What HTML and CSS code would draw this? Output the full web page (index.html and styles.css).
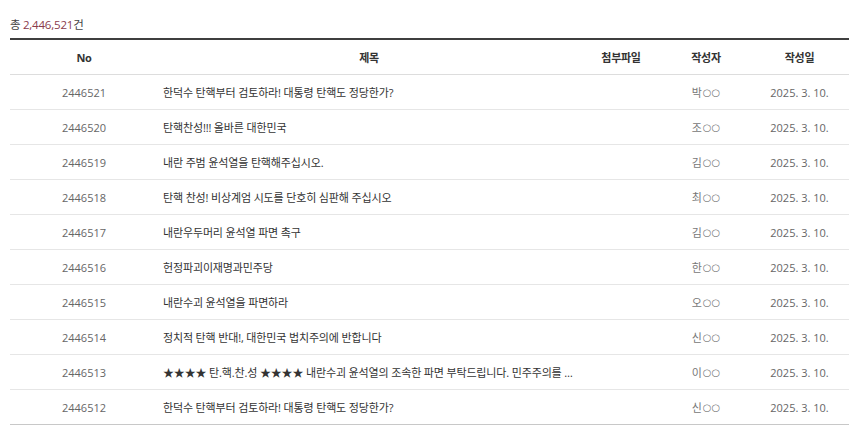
FILE: index.html
```html
<!DOCTYPE html>
<html lang="ko">
<head>
<meta charset="utf-8">
<link rel="stylesheet" href="styles.css">
</head>
<body>
<div class="board">
  <p class="total">총 <span class="count">2,446,521</span>건</p>
  <table class="list">
    <colgroup>
      <col class="c-no"><col class="c-title"><col class="c-file"><col class="c-writer"><col class="c-date">
    </colgroup>
    <thead>
      <tr><th>No</th><th>제목</th><th>첨부파일</th><th>작성자</th><th>작성일</th></tr>
    </thead>
    <tbody>
      <tr><td class="no">2446521</td><td class="title">한덕수 탄핵부터 검토하라! 대통령 탄핵도 정당한가?</td><td></td><td class="writer">박<span class="mask">○○</span></td><td class="date">2025. 3. 10.</td></tr>
      <tr><td class="no">2446520</td><td class="title">탄핵찬성!!! 올바른 대한민국</td><td></td><td class="writer">조<span class="mask">○○</span></td><td class="date">2025. 3. 10.</td></tr>
      <tr><td class="no">2446519</td><td class="title">내란 주범 윤석열을 탄핵해주십시오.</td><td></td><td class="writer">김<span class="mask">○○</span></td><td class="date">2025. 3. 10.</td></tr>
      <tr><td class="no">2446518</td><td class="title">탄핵 찬성! 비상계엄 시도를 단호히 심판해 주십시오</td><td></td><td class="writer">최<span class="mask">○○</span></td><td class="date">2025. 3. 10.</td></tr>
      <tr><td class="no">2446517</td><td class="title">내란우두머리 윤석열 파면 촉구</td><td></td><td class="writer">김<span class="mask">○○</span></td><td class="date">2025. 3. 10.</td></tr>
      <tr><td class="no">2446516</td><td class="title">헌정파괴이재명과민주당</td><td></td><td class="writer">한<span class="mask">○○</span></td><td class="date">2025. 3. 10.</td></tr>
      <tr><td class="no">2446515</td><td class="title">내란수괴 윤석열을 파면하라</td><td></td><td class="writer">오<span class="mask">○○</span></td><td class="date">2025. 3. 10.</td></tr>
      <tr><td class="no">2446514</td><td class="title">정치적 탄핵 반대!, 대한민국 법치주의에 반합니다</td><td></td><td class="writer">신<span class="mask">○○</span></td><td class="date">2025. 3. 10.</td></tr>
      <tr><td class="no">2446513</td><td class="title">★★★★ 탄.핵.찬.성 ★★★★ 내란수괴 윤석열의 조속한 파면 부탁드립니다. 민주주의를 …</td><td></td><td class="writer">이<span class="mask">○○</span></td><td class="date">2025. 3. 10.</td></tr>
      <tr><td class="no">2446512</td><td class="title">한덕수 탄핵부터 검토하라! 대통령 탄핵도 정당한가?</td><td></td><td class="writer">신<span class="mask">○○</span></td><td class="date">2025. 3. 10.</td></tr>
    </tbody>
  </table>
</div>
</body>
</html>
```

FILE: styles.css
```css
html, body {
  margin: 0;
  padding: 0;
  background: #fff;
}
body {
  font-family: "Open Sans", "Noto Sans CJK KR", sans-serif;
  font-size: 11px;
  color: #666;
}
.board {
  padding: 0 11px 0 10px;
}
.total {
  margin: 0;
  padding-top: 17px;
  height: 21px;
  font-size: 11.5px;
  color: #444;
  letter-spacing: -0.3px;
  line-height: 16px;
}
.count {
  color: #8a3b4c;
  letter-spacing: -0.2px;
}
.list {
  width: 100%;
  border-collapse: collapse;
  table-layout: fixed;
  border-top: 2px solid #3f3f3f;
  border-bottom: 1px solid #c8c8c8;
}
.c-no { width: 148px; }
.c-file { width: 82px; }
.c-writer { width: 88px; }
.c-date { width: 99px; }
.list th {
  height: 34px;
  font-weight: 700;
  font-size: 11px;
  color: #333;
  text-align: center;
  border-bottom: 1px solid #ddd;
  padding: 0;
  letter-spacing: -0.3px;
}
.list td {
  height: 34px;
  padding: 0;
  text-align: center;
  border-bottom: 1px solid #e6e6e6;
  white-space: nowrap;
  overflow: hidden;
}
.list td.no { color: #666; }
.list td.title {
  text-align: left;
  padding-left: 5px;
  color: #333;
  letter-spacing: -0.15px;
}
.list td.writer { color: #777; letter-spacing: -0.3px; }
.mask {
  font-family: "DejaVu Sans", sans-serif;
  font-size: 10px;
  letter-spacing: 0;
  margin-left: 1px;
  vertical-align: 1px;
}
.list td.date { color: #666; }
.list tbody tr:last-child td { border-bottom: none; }
```
